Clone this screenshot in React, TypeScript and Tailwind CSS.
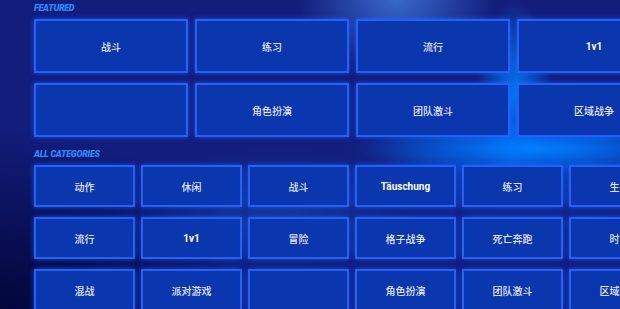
import { type FC } from "react";

const featured = ["战斗", "练习", "流行", "1v1", "", "角色扮演", "团队激斗", "区域战争"];

const categories = [
  "动作", "休闲", "战斗", "Täuschung", "练习", "生存",
  "流行", "1v1", "冒险", "格子战争", "死亡奔跑", "时间",
  "混战", "派对游戏", "", "角色扮演", "团队激斗", "区域战争",
];

const isLatin = (s: string) => /^[A-Za-z0-9äöü]+$/.test(s);

const Tile: FC<{ label: string; className: string }> = ({ label, className }) => (
  <div
    className={`${className} shrink-0 flex items-center justify-center bg-[#0a36ae] border-2 border-[#1f62ff] shadow-[0_0_5px_rgba(30,100,255,0.7)]`}
  >
    <span
      className={
        isLatin(label)
          ? "text-[10px] font-bold text-white font-['Roboto',sans-serif]"
          : "text-[10px] font-medium text-[#e2e7fa] font-['Noto_Sans_CJK_SC',sans-serif]"
      }
    >
      {label}
    </span>
  </div>
);

const Heading: FC<{ text: string }> = ({ text }) => (
  <h2 className="text-[9px] leading-[10px] font-black italic uppercase text-[#2b8cff] font-['Roboto',sans-serif] tracking-[-0.3px]">
    {text}
  </h2>
);

const App: FC = () => {
  return (
    <div className="relative w-[620px] h-[309px] overflow-hidden bg-[#131d7c]">
      <div className="absolute inset-0 bg-[radial-gradient(ellipse_55%_85%_at_0%_100%,#02063a_0%,rgba(2,6,58,0)_70%)]" />
      <div className="absolute inset-0 bg-[radial-gradient(ellipse_16%_22%_at_64%_0%,rgba(70,130,230,0.75)_0%,rgba(70,130,230,0)_100%)]" />
      <div className="absolute inset-0 bg-[radial-gradient(ellipse_28%_9%_at_86%_48%,rgba(0,140,255,1)_0%,rgba(0,120,255,0.6)_45%,rgba(0,100,255,0)_100%)]" />
      <div className="absolute inset-0 bg-[radial-gradient(ellipse_6%_30%_at_83%_30%,rgba(0,130,255,0.9)_0%,rgba(0,120,255,0)_100%)]" />
      <div className="absolute inset-0 bg-[radial-gradient(ellipse_30%_25%_at_85%_50%,rgba(0,110,255,0.45)_0%,rgba(0,110,255,0)_100%)]" />
      <div className="absolute inset-0 bg-[radial-gradient(ellipse_25%_20%_at_45%_68%,rgba(20,100,200,0.35)_0%,rgba(20,100,200,0)_100%)]" />

      <div className="relative flex flex-col pl-[34px] pt-[3px]">
        <Heading text="Featured" />
        <div className="mt-[6px] grid grid-cols-[repeat(4,154px)] gap-x-[7px] gap-y-[10px] w-max">
          {featured.map((f, i) => (
            <Tile key={i} label={f} className="w-[154px] h-[54px]" />
          ))}
        </div>

        <div className="mt-[12px]">
          <Heading text="All Categories" />
        </div>
        <div className="mt-[6px] grid grid-cols-[repeat(6,101px)] gap-x-[6px] gap-y-[10px] w-max">
          {categories.map((c, i) => (
            <Tile key={i} label={c} className="w-[101px] h-[42px]" />
          ))}
        </div>
      </div>
    </div>
  );
};

export default App;
